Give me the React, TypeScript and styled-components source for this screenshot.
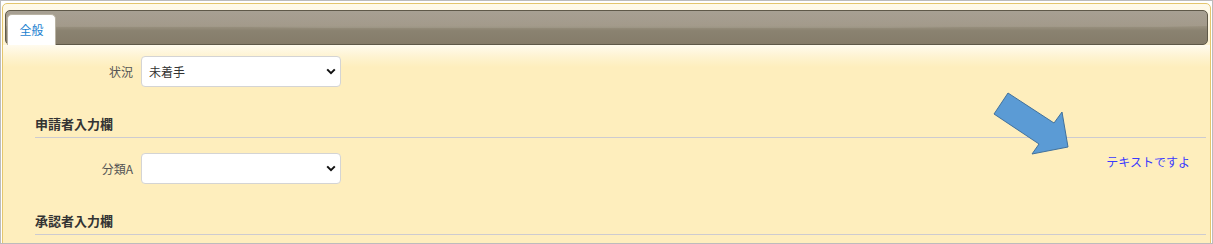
import { FunctionComponent } from 'react'
import styled, { createGlobalStyle } from 'styled-components'

const GlobalStyle = createGlobalStyle`
  html, body {
    margin: 0;
    padding: 0;
    background: #ffffff;
  }
  body {
    font-family: "Noto Sans CJK JP", "Noto Sans", sans-serif;
    font-size: 12px;
  }
`

interface FieldProps {
  label: string
  value?: string
}

const Field: FunctionComponent<FieldProps> = ({ label, value = '' }) => {
  return (
    <FieldRow>
      <Label>{label}</Label>
      <SelectWrap>
        <Select defaultValue={value}>
          <option value={value}>{value}</option>
        </Select>
        <Chevron width="10" height="7" viewBox="0 0 10 7">
          <path d="M1.2 1.4 L5 5.2 L8.8 1.4" fill="none" stroke="#111" strokeWidth="2" />
        </Chevron>
      </SelectWrap>
    </FieldRow>
  )
}

export default function App() {
  return (
    <>
      <GlobalStyle />
      <Frame>
        <Panel>
          <TabBar>
            <Tab>全般</Tab>
          </TabBar>
          <Content>
            <Field label="状況" value="未着手" />
            <SectionTitle>申請者入力欄</SectionTitle>
            <SplitRow>
              <Field label="分類A" />
              <Note>テキストですよ</Note>
            </SplitRow>
            <SectionTitle>承認者入力欄</SectionTitle>
            <Spacer />
          </Content>
        </Panel>
        <Arrow width="80" height="70" viewBox="0 0 80 70">
          <polygon
            points="17,4 63,34 71,23 77,58 41,65 48,55 3,25"
            fill="#5b9bd5"
            stroke="#41719c"
            strokeWidth="1"
          />
        </Arrow>
      </Frame>
    </>
  )
}

const Frame = styled.div`
  position: relative;
  box-sizing: border-box;
  width: 1213px;
  height: 244px;
  border: 1px solid #bcbcbc;
  background: #ffffff;
  padding: 2px 1px 0 1px;
  overflow: hidden;
`

const Panel = styled.div`
  box-sizing: border-box;
  width: 1209px;
  height: 300px;
  border: 1px solid #e4c66e;
  border-radius: 5px;
  background: linear-gradient(#fffaea 0px, #fef3d2 40px, #feeebd 90px);
  padding: 6px 2px 0 2px;
`

const TabBar = styled.div`
  box-sizing: border-box;
  height: 35px;
  border: 1px solid #5e5848;
  border-radius: 5px;
  background:
    radial-gradient(140% 60% at 50% 0%, rgba(255, 255, 255, 0.08) 0%, rgba(255, 255, 255, 0.08) 85%, transparent 86%),
    linear-gradient(#a0988a 0%, #9b9281 45%, #8a8270 60%, #857c6a 100%);
  padding: 3px 0 0 1px;
  display: flex;
  align-items: flex-end;
`

const Tab = styled.div`
  box-sizing: border-box;
  width: 49px;
  height: 31px;
  margin-bottom: -1px;
  background: #ffffff;
  border: 1px solid #b9b3a4;
  border-bottom: none;
  border-radius: 5px 5px 0 0;
  color: #1c7fd0;
  font-size: 12px;
  display: flex;
  align-items: center;
  justify-content: center;
  padding-bottom: 2px;
`

const Content = styled.div`
  background: linear-gradient(#fffbee 0px, #fef3d0 12px, #feeebd 22px);
  margin: 0 -2px;
  padding: 11px 2px 0 2px;
`

const FieldRow = styled.div`
  display: flex;
  align-items: center;
  height: 31px;
`

const Label = styled.div`
  box-sizing: border-box;
  width: 136px;
  padding-right: 8px;
  text-align: right;
  color: #555555;
  font-size: 12px;
`

const SelectWrap = styled.div`
  position: relative;
  width: 200px;
  height: 31px;
`

const Select = styled.select`
  appearance: none;
  box-sizing: border-box;
  width: 100%;
  height: 100%;
  border: 1px solid #d4d4d4;
  border-radius: 4px;
  background: #ffffff;
  padding: 0 24px 0 7px;
  font-family: "Noto Sans CJK JP", "Noto Sans", sans-serif;
  font-size: 12px;
  color: #333333;
  outline: none;
`

const Chevron = styled.svg`
  position: absolute;
  right: 5px;
  top: 12px;
  pointer-events: none;
`

const SectionTitle = styled.div`
  margin: 28px 2px 0 30px;
  padding-bottom: 4px;
  border-bottom: 1px solid #cdcbd0;
  font-size: 13px;
  font-weight: bold;
  color: #333333;
  line-height: 18px;
`

const SplitRow = styled.div`
  display: flex;
  justify-content: space-between;
  align-items: flex-start;
  margin-top: 15px;
  padding-right: 18px;
`

const Note = styled.div`
  color: #3a3aff;
  font-size: 12px;
`

const Spacer = styled.div`
  height: 40px;
`

const Arrow = styled.svg`
  position: absolute;
  left: 990px;
  top: 88px;
`
